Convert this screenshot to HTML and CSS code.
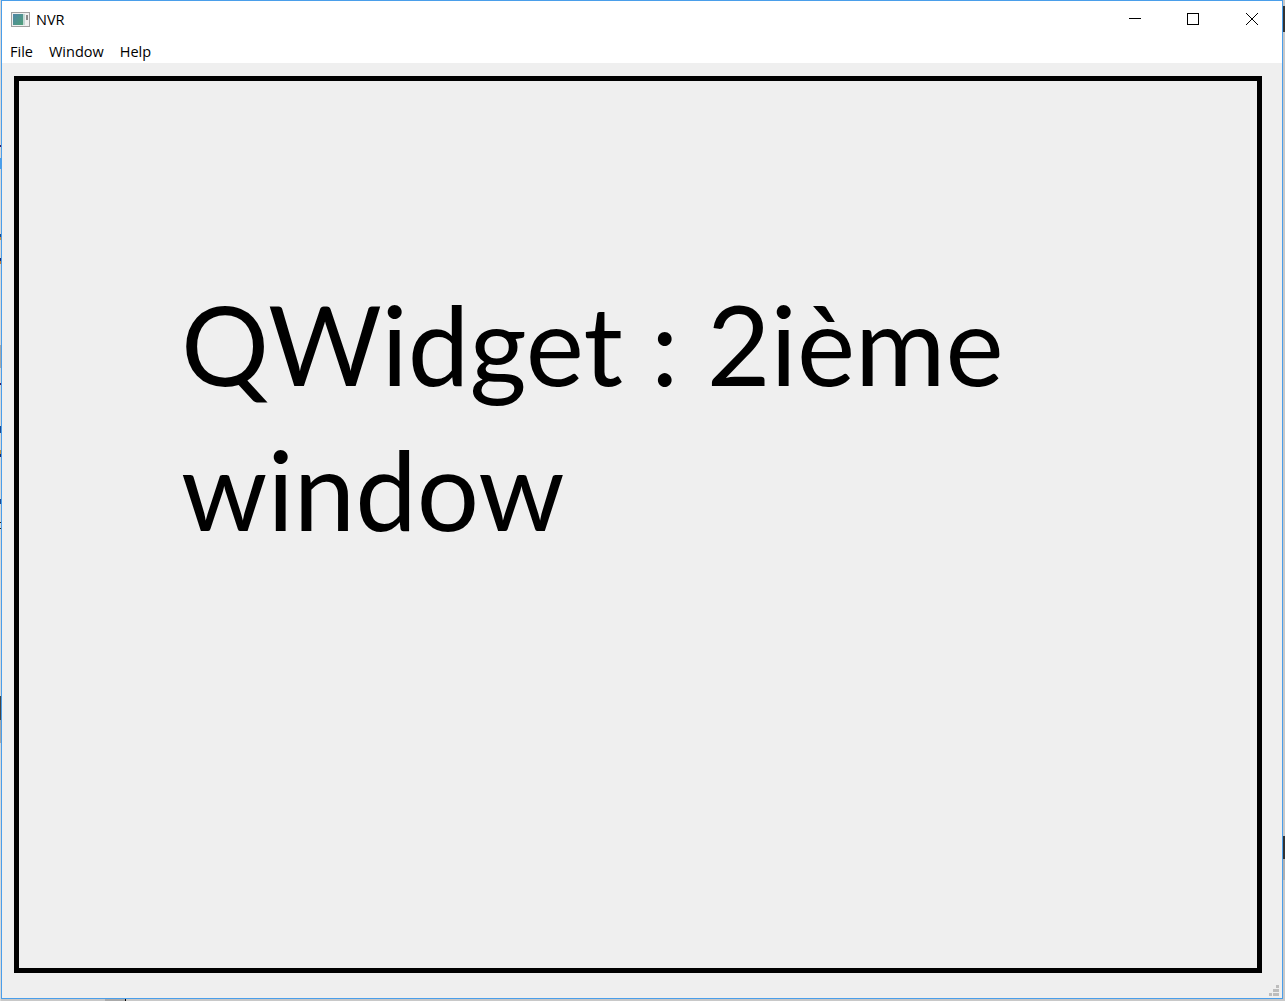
FILE: index.html
```html
<!DOCTYPE html>
<html lang="en">
<head>
    <meta charset="UTF-8">
    <title>NVR</title>
    <link rel="stylesheet" href="styles.css">
</head>
<body>
    <div class="window">
        <div class="titlebar">
            <svg class="app-icon" width="19" height="15" viewBox="0 0 19 15">
                <defs>
                    <linearGradient id="iconFill" x1="0" y1="0" x2="1" y2="1">
                        <stop offset="0" stop-color="#4f86a8"/>
                        <stop offset="1" stop-color="#4fa078"/>
                    </linearGradient>
                </defs>
                <rect x="0.5" y="0.5" width="18" height="14" fill="#f0f0f0" stroke="#a0a0a0"/>
                <rect x="2" y="2" width="10" height="11" fill="url(#iconFill)"/>
                <rect x="12" y="2" width="2" height="11" fill="#c4d8d4"/>
                <rect x="15" y="3" width="2" height="5" fill="#8a8a8a"/>
            </svg>
            <span class="title">NVR</span>
            <div class="controls">
                <div class="control">
                    <svg width="12" height="12" viewBox="0 0 12 12"><path d="M0 5.5H12" stroke="#000" fill="none"/></svg>
                </div>
                <div class="control">
                    <svg width="12" height="12" viewBox="0 0 12 12"><rect x="0.5" y="0.5" width="11" height="11" stroke="#000" fill="none"/></svg>
                </div>
                <div class="control">
                    <svg width="12" height="12" viewBox="0 0 12 12"><path d="M0 0L12 12M12 0L0 12" stroke="#000" fill="none"/></svg>
                </div>
            </div>
        </div>
        <div class="menubar">
            <span class="menu-item">File</span>
            <span class="menu-item">Window</span>
            <span class="menu-item">Help</span>
        </div>
        <div class="content">
            <div class="panel">
                <p class="label">QWidget : 2ième window</p>
            </div>
            <div class="statusbar">
                <svg width="10" height="11" viewBox="0 0 10 11" fill="#bdbdbd">
                    <rect x="7" y="0" width="3" height="3"/>
                    <rect x="4" y="4" width="3" height="3"/>
                    <rect x="7" y="4" width="3" height="3"/>
                    <rect x="0" y="8" width="3" height="3"/>
                    <rect x="4" y="8" width="3" height="3"/>
                    <rect x="7" y="8" width="3" height="3"/>
                </svg>
            </div>
        </div>
    </div>
</body>
</html>
```
FILE: styles.css
```css
html, body {
    margin: 0;
    height: 100%;
    overflow: hidden;
}

/* what shows of the desktop round the window: 1px on the left, 2px right and below */
body {
    background:
        linear-gradient(#000, #000) 125px 999px / 1px 2px no-repeat,
        linear-gradient(#aaa, #aaa) 105px 999px / 20px 2px no-repeat,
        linear-gradient(to bottom,
            #d8d8d8 0 145px, #3a1a60 145px 147px, #d8d8d8 147px 158px, #4a9eea 158px 169px,
            #d8d8d8 169px 234px, #1a4a90 234px 237px, #d09040 237px 240px, #d8d8d8 240px 258px,
            #1a2a70 258px 261px, #c08040 261px 264px, #d8d8d8 264px 345px, #a8a8a8 345px 368px,
            #d8d8d8 368px 383px, #3a1a60 383px 385px, #d8d8d8 385px 426px, #1a4a90 426px 433px,
            #d8d8d8 433px 450px, #c09040 450px 454px, #1a2a70 454px 457px, #d8d8d8 457px 499px,
            #1a4a90 499px 504px, #d8d8d8 504px 522px, #222 522px 523px, #d8d8d8 523px 528px,
            #222 528px 529px, #d8d8d8 529px 696px, #444 696px 720px, #a8a8a8 720px 743px,
            #d8d8d8 743px) 0 0 / 1px 100% no-repeat,
        linear-gradient(to bottom,
            #c8c8c8 0 6px, #333 6px 32px, #c8c8c8 32px 836px, #333 836px 859px,
            #b0b0b0 859px 880px, #c8c8c8 880px) 100% 0 / 2px 100% no-repeat,
        #c8c8c8;
}

.window {
    box-sizing: border-box;
    width: 1282px;
    height: 999px;
    margin-left: 1px;
    border: 1px solid #4a9eea;
    background: #fff;
    display: flex;
    flex-direction: column;
    font-family: 'Open Sans', sans-serif;
    font-size: 14.5px;
    color: #000;
}

.titlebar {
    height: 36px;
    display: flex;
    align-items: center;
    padding-left: 9px;
    flex-shrink: 0;
}

.app-icon {
    margin-right: 6px;
}

.title {
    flex: 1;
}

.controls {
    display: flex;
}

.control {
    width: 58px;
    height: 36px;
    display: flex;
    align-items: center;
    justify-content: center;
}

.control:last-child {
    width: 60px;
}

.menubar {
    box-sizing: border-box;
    height: 26px;
    display: flex;
    align-items: center;
    gap: 16px;
    padding: 2px 0 0 8px;
    flex-shrink: 0;
}

.content {
    flex: 1;
    background: #efefef;
    display: flex;
    flex-direction: column;
    padding: 13px 20px 0 12px;
    min-height: 0;
}

.panel {
    box-sizing: border-box;
    height: 897px;
    border: 5px solid #000;
    padding: 190px 160px 0 162px;
    flex-shrink: 0;
}

.label {
    margin: 0;
    font-family: 'Lato', sans-serif;
    font-size: 110px;
    line-height: 145px;
}

.statusbar {
    flex: 1;
    display: flex;
    justify-content: flex-end;
    align-items: flex-end;
    margin-right: -17px;
    padding-bottom: 2px;
}
```
